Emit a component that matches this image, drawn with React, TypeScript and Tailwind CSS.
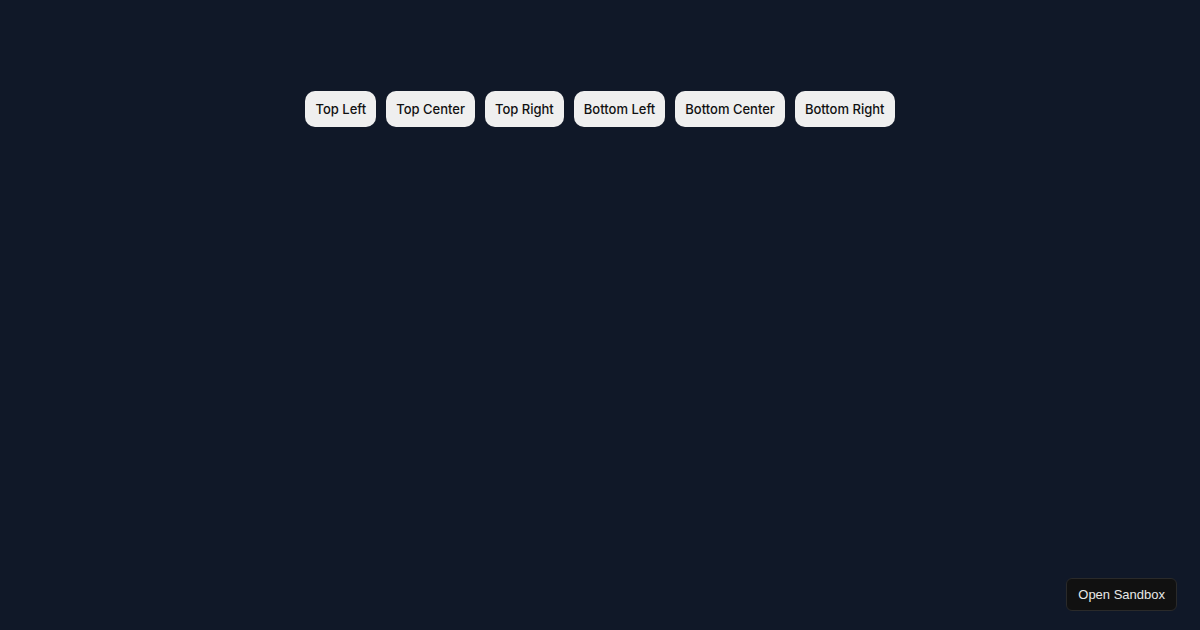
const positions = ['Top Left', 'Top Center', 'Top Right', 'Bottom Left', 'Bottom Center', 'Bottom Right'];

export default function App() {
    return (
        <div className="min-h-screen w-full bg-[#101828] font-['Inter',sans-serif]">
            <div className="flex justify-center gap-[10px] pt-[91px]">
                {positions.map((p) => (
                    <button
                        key={p}
                        className="h-9 rounded-[10px] bg-[#efefef] px-2.5 pt-px text-[13px] font-medium text-[#111]"
                    >
                        {p}
                    </button>
                ))}
            </div>

            <button className="fixed right-[23px] bottom-[19px] h-[33px] rounded-md border border-[#2a2a2a] bg-[#111111] px-[11px] text-[13px] text-[#e8e8e8] font-['Liberation_Sans',sans-serif]">
                Open Sandbox
            </button>
        </div>
    );
}
